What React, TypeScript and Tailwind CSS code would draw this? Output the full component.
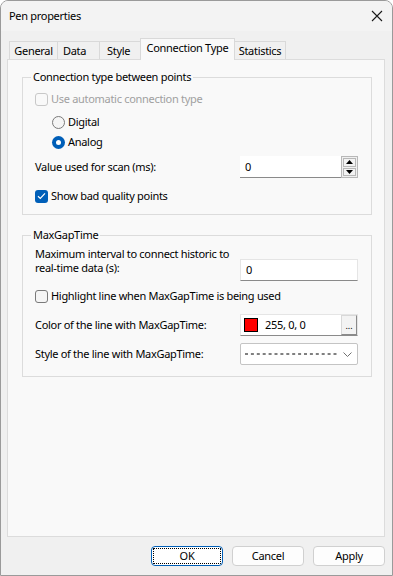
import React from "react";

const font = { fontFamily: '"Segoe UI", "Noto Sans", sans-serif', letterSpacing: "-0.3px" };

function CheckBox({ checked, disabled, label }: { checked?: boolean; disabled?: boolean; label: string }) {
  return (
    <div className="flex items-center h-[16px]">
      {checked ? (
        <div className="w-[13px] h-[13px] rounded-[3px] bg-[#005fb8] flex items-center justify-center shrink-0">
          <svg width="9" height="8" viewBox="0 0 9 8">
            <path d="M1 4.2 L3.3 6.4 L8 1.4" fill="none" stroke="white" strokeWidth="1.2" />
          </svg>
        </div>
      ) : (
        <div
          className={
            "w-[13px] h-[13px] rounded-[3px] border shrink-0 " +
            (disabled ? "border-[#c8c8c8] bg-[#f9f9f9]" : "border-[#7a7a7a] bg-[#f5f5f5]")
          }
        />
      )}
      <span className={"ml-[3px] " + (disabled ? "text-[#a0a0a0]" : "text-black")}>{label}</span>
    </div>
  );
}

function Radio({ checked, label }: { checked?: boolean; label: string }) {
  return (
    <div className="flex items-center h-[16px]">
      {checked ? (
        <div className="w-[13px] h-[13px] rounded-full bg-[#005fb8] flex items-center justify-center shrink-0">
          <div className="w-[5px] h-[5px] rounded-full bg-white" />
        </div>
      ) : (
        <div className="w-[13px] h-[13px] rounded-full border border-[#7a7a7a] bg-[#f5f5f5] shrink-0" />
      )}
      <span className="ml-[3px]">{label}</span>
    </div>
  );
}

export default function App() {
  return (
    <div
      className="w-[393px] h-[576px] bg-[#f0f0f0] border border-[#9a9a9a] rounded-t-[8px] overflow-hidden flex flex-col text-[11px] text-black leading-[16px]"
      style={font}
    >
      {/* Title bar */}
      <div className="h-[30px] shrink-0 flex items-center justify-between pl-[8px] pr-[9px] bg-[#f3f3f3]">
        <span>Pen properties</span>
        <svg width="12" height="12" viewBox="0 0 12 12">
          <path d="M1 1 L11 11 M11 1 L1 11" stroke="#1a1a1a" strokeWidth="1.1" />
        </svg>
      </div>

      {/* Tabs */}
      <div className="pt-[7px] pl-[8px] flex items-end h-[28px] shrink-0">
        <div className="h-[18px] w-[48px] border border-r-0 border-b-0 border-[#d9d9d9] bg-[#f0f0f0] flex items-center justify-center">
          General
        </div>
        <div className="h-[18px] w-[42px] border border-r-0 border-b-0 border-[#d9d9d9] bg-[#f0f0f0] flex items-center pl-[5px]">
          Data
        </div>
        <div className="h-[18px] w-[42px] border border-b-0 border-[#d9d9d9] bg-[#f0f0f0] flex items-center pl-[7px]">
          Style
        </div>
        <div className="h-[22px] w-[95px] border border-b-0 border-[#d9d9d9] bg-[#f9f9f9] flex items-start pt-[1px] justify-center relative z-10 mb-[-1px] ml-[-1px]">
          Connection Type
        </div>
        <div className="h-[18px] w-[51px] border border-l-0 border-b-0 border-[#d9d9d9] bg-[#f0f0f0] flex items-center justify-center">
          Statistics
        </div>
      </div>

      {/* Panel */}
      <div className="ml-[6px] w-[378px] h-[478px] shrink-0 bg-[#f9f9f9] border border-[#dcdcdc] pt-[9px] pl-[14px]">
        {/* Group 1 */}
        <fieldset className="border border-[#dcdcdc] w-[350px] h-[146px] pl-[12px] pr-[13px] m-0">
          <legend className="px-[2px] ml-[-4px]">Connection type between points</legend>
          <div className="flex flex-col">
            <div className="mt-[6px]">
              <CheckBox disabled label="Use automatic connection type" />
            </div>
            <div className="ml-[17px] mt-[7px]">
              <Radio label="Digital" />
            </div>
            <div className="ml-[17px] mt-[4px]">
              <Radio checked label="Analog" />
            </div>
            <div className="flex items-center justify-between mt-[6px]">
              <span>Value used for scan (ms):</span>
              <div className="w-[118px] h-[22px] bg-white border-b border-[#8a8a8a] flex items-center relative">
                <span className="pl-[5px]">0</span>
                <div className="absolute right-0 top-0 flex flex-col w-[17px] h-[22px] bg-[#f0f0f0] border border-[#b8b8b8] p-[1px] gap-[1px]">
                  <div className="flex-1 border border-[#b8b8b8] bg-[#f3f3f3] flex items-center justify-center">
                    <svg width="7" height="4" viewBox="0 0 7 4"><path d="M0 4 L3.5 0 L7 4Z" fill="#000" /></svg>
                  </div>
                  <div className="flex-1 border border-[#b8b8b8] bg-[#f3f3f3] flex items-center justify-center">
                    <svg width="7" height="4" viewBox="0 0 7 4"><path d="M0 0 L3.5 4 L7 0Z" fill="#000" /></svg>
                  </div>
                </div>
              </div>
            </div>
            <div className="mt-[10px]">
              <CheckBox checked label="Show bad quality points" />
            </div>
          </div>
        </fieldset>

        {/* Group 2 */}
        <fieldset className="border border-[#dcdcdc] w-[350px] h-[150px] pl-[12px] pr-[13px] m-0 mt-[12px]">
          <legend className="px-[2px] ml-[-4px]">MaxGapTime</legend>
          <div className="flex flex-col">
            <div className="flex items-start justify-between mt-[4px]">
              <div className="flex flex-col">
                <div className="h-[14px] leading-[14px]">Maximum interval to connect historic to</div>
                <div className="h-[14px] leading-[14px]">real-time data (s):</div>
              </div>
              <div className="w-[118px] h-[22px] mt-[12px] bg-white border border-[#e5e5e5] border-b-[#8a8a8a] flex items-center pl-[5px] shrink-0">
                0
              </div>
            </div>
            <div className="mt-[7px]">
              <CheckBox label="Highlight line when MaxGapTime is being used" />
            </div>
            <div className="flex items-center justify-between mt-[10px]">
              <span>Color of the line with MaxGapTime:</span>
              <div className="w-[118px] h-[22px] bg-white border border-[#e5e5e5] border-b-[#8a8a8a] flex items-center pl-[3px] relative">
                <div className="w-[14px] h-[14px] bg-[#ff0000] border border-black" />
                <span className="ml-[7px]">255, 0, 0</span>
                <div className="absolute right-[0px] top-[0px] w-[16px] h-[20px] bg-[#f3f3f3] border border-[#d8d8d8] border-b-[#8a8a8a] border-r-[#8a8a8a] flex items-end justify-center pb-[5px]">
                  <span className="text-[9px] leading-[6px] tracking-normal">...</span>
                </div>
              </div>
            </div>
            <div className="flex items-center justify-between mt-[7px]">
              <span>Style of the line with MaxGapTime:</span>
              <div className="w-[118px] h-[22px] bg-white border border-[#c4c4c4] rounded-[2px] flex items-center pl-[4px] pr-[5px] justify-between">
                <svg width="94" height="2" viewBox="0 0 94 2">
                  <line x1="0" y1="1" x2="94" y2="1" stroke="#000" strokeWidth="1" strokeDasharray="3 2.9" />
                </svg>
                <svg width="9" height="5" viewBox="0 0 9 5">
                  <path d="M0.5 0.5 L4.5 4.5 L8.5 0.5" fill="none" stroke="#707070" strokeWidth="1" />
                </svg>
              </div>
            </div>
          </div>
        </fieldset>
      </div>

      {/* Buttons */}
      <div className="flex justify-end gap-[9px] pr-[7px] mt-[9px]">
        <div className="w-[72px] h-[20px] rounded-[4px] border border-[#005fb8] bg-white flex items-center justify-center p-[1px]">
          <div className="w-full h-full border border-dotted border-black rounded-[1px] flex items-center justify-center">
            OK
          </div>
        </div>
        <div className="w-[72px] h-[20px] rounded-[4px] border border-[#d0d0d0] bg-[#fdfdfd] flex items-center justify-center">
          Cancel
        </div>
        <div className="w-[72px] h-[20px] rounded-[4px] border border-[#d0d0d0] bg-[#fdfdfd] flex items-center justify-center">
          Apply
        </div>
      </div>
    </div>
  );
}
